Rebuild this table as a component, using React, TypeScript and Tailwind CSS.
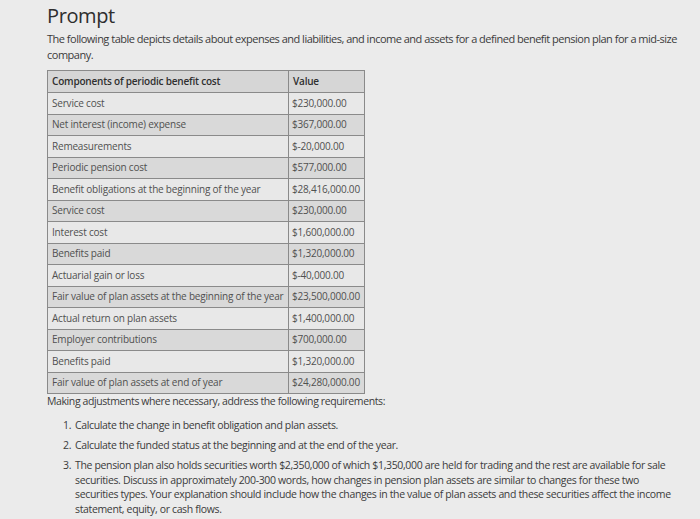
const rows: [string, string][] = [
  ["Service cost", "$230,000.00"],
  ["Net interest (income) expense", "$367,000.00"],
  ["Remeasurements", "$-20,000.00"],
  ["Periodic pension cost", "$577,000.00"],
  ["Benefit obligations at the beginning of the year", "$28,416,000.00"],
  ["Service cost", "$230,000.00"],
  ["Interest cost", "$1,600,000.00"],
  ["Benefits paid", "$1,320,000.00"],
  ["Actuarial gain or loss", "$-40,000.00"],
  ["Fair value of plan assets at the beginning of the year", "$23,500,000.00"],
  ["Actual return on plan assets", "$1,400,000.00"],
  ["Employer contributions", "$700,000.00"],
  ["Benefits paid", "$1,320,000.00"],
  ["Fair value of plan assets at end of year", "$24,280,000.00"],
];

export default function App() {
  return (
    <div className="h-[519px] w-[700px] overflow-hidden bg-[#ebebeb] pl-[47px] pt-[3px] font-['Open_Sans',sans-serif] text-[#3b3b3b]">
      <h1 className="text-[20px] leading-[26px] font-medium tracking-[-0.4px] text-[#2e2e2e]">Prompt</h1>
      <p className="mt-[2px] w-[642px] text-[11px] leading-[16px] tracking-[-0.5px]">
        The following table depicts details about expenses and liabilities, and income and assets for a
        defined benefit pension plan for a mid-size company.
      </p>

      <table className="mt-[7px] border-collapse text-[10px] tracking-[-0.2px]">
        <thead>
          <tr className="bg-[#d6d6d6]">
            <th className="h-[22px] w-[241px] border border-[#8a8a8a] px-[4px] text-left font-semibold text-[#2f2f2f]">
              Components of periodic benefit cost
            </th>
            <th className="w-[76px] border border-[#8a8a8a] px-[4px] text-left font-semibold text-[#2f2f2f]">
              Value
            </th>
          </tr>
        </thead>
        <tbody>
          {rows.map(([label, value], i) => (
            <tr key={i} className={i % 2 === 0 ? "bg-[#e8e8e8]" : "bg-[#d9d9d9]"}>
              <td className="h-[21.5px] border border-[#8a8a8a] px-[4px] whitespace-nowrap text-[#505050]">
                {label}
              </td>
              <td className="border border-[#8a8a8a] px-[3px] whitespace-nowrap text-[#505050]">
                {value}
              </td>
            </tr>
          ))}
        </tbody>
      </table>

      <p className="text-[10.5px] leading-[14px] tracking-[-0.4px]">
        Making adjustments where necessary, address the following requirements:
      </p>

      <ol className="mt-[10px] ml-[16px] w-[616px] space-y-[5.5px] text-[10.5px] leading-[14.5px] tracking-[-0.35px]">
        <li className="flex">
          <span className="w-[12px] shrink-0">1.</span>
          <span>Calculate the change in benefit obligation and plan assets.</span>
        </li>
        <li className="flex">
          <span className="w-[12px] shrink-0">2.</span>
          <span>Calculate the funded status at the beginning and at the end of the year.</span>
        </li>
        <li className="flex">
          <span className="w-[12px] shrink-0">3.</span>
          <span>
            The pension plan also holds securities worth $2,350,000 of which $1,350,000 are held for trading and
            the rest are available for sale securities. Discuss in approximately 200-300 words, how changes in
            pension plan assets are similar to changes for these two securities types. Your explanation should
            include how the changes in the value of plan assets and these securities affect the income
            statement, equity, or cash flows.
          </span>
        </li>
      </ol>
    </div>
  );
}
